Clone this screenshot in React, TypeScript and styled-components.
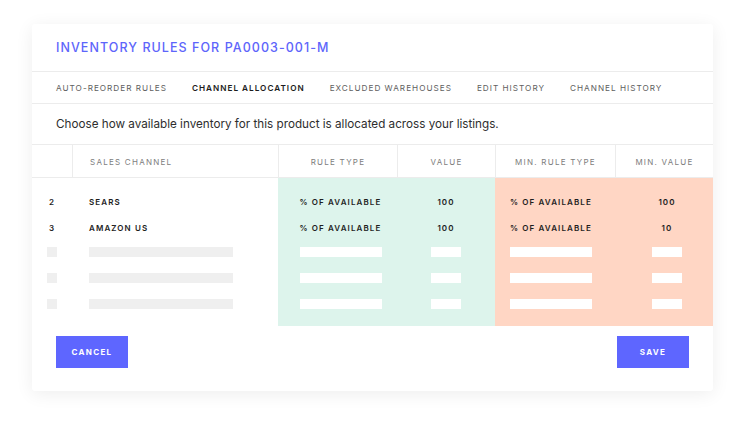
import React from "react";
import styled, { createGlobalStyle, css } from "styled-components";

type Align = "left" | "center";
type Tone = "none" | "green" | "peach";

interface ColumnDef {
  key: keyof RowData;
  label: string;
  width: number;
  align: Align;
  tone: Tone;
  nudge: number;
  bar: number;
}

interface RowData {
  num: string;
  channel: string;
  ruleType: string;
  value: string;
  minRuleType: string;
  minValue: string;
}

const columns: ColumnDef[] = [
  { key: "num", label: "", width: 40, align: "center", tone: "none", nudge: 0, bar: 10 },
  { key: "channel", label: "SALES CHANNEL", width: 206, align: "left", tone: "none", nudge: 0, bar: 144 },
  { key: "ruleType", label: "RULE TYPE", width: 119, align: "center", tone: "green", nudge: 3, bar: 82 },
  { key: "value", label: "VALUE", width: 98, align: "center", tone: "green", nudge: 0, bar: 30 },
  { key: "minRuleType", label: "MIN. RULE TYPE", width: 120, align: "center", tone: "peach", nudge: -4, bar: 82 },
  { key: "minValue", label: "MIN. VALUE", width: 98, align: "center", tone: "peach", nudge: 3, bar: 30 },
];

const rows: RowData[] = [
  { num: "2", channel: "SEARS", ruleType: "% OF AVAILABLE", value: "100", minRuleType: "% OF AVAILABLE", minValue: "100" },
  { num: "3", channel: "AMAZON US", ruleType: "% OF AVAILABLE", value: "100", minRuleType: "% OF AVAILABLE", minValue: "10" },
];

const tabs = ["AUTO-REORDER RULES", "CHANNEL ALLOCATION", "EXCLUDED WAREHOUSES", "EDIT HISTORY", "CHANNEL HISTORY"];

const placeholderRows = 3;

const GlobalStyle = createGlobalStyle`
  body {
    margin: 0;
    background: #fff;
    font-family: Inter, "Noto Sans", sans-serif;
    -webkit-font-smoothing: antialiased;
  }
`;

const Page = styled.div`
  padding: 24px 32px;
`;

const Card = styled.div`
  width: 681px;
  background: #fff;
  border-radius: 3px;
  box-shadow: 0 3px 18px rgba(0, 0, 0, 0.07);
  overflow: hidden;
`;

const Title = styled.h1`
  margin: 0;
  height: 48px;
  padding: 0 24px;
  display: flex;
  align-items: center;
  font-size: 12.5px;
  font-weight: 500;
  letter-spacing: 1.05px;
  color: #5d65fb;
  border-bottom: 1px solid #ececec;
  box-sizing: border-box;
`;

const Tabs = styled.nav`
  height: 32px;
  padding: 0 24px;
  display: flex;
  align-items: center;
  gap: 25px;
  border-bottom: 1px solid #ececec;
  box-sizing: border-box;
`;

const Tab = styled.span<{ $active?: boolean }>`
  font-size: 8.2px;
  letter-spacing: 1px;
  color: ${(p) => (p.$active ? "#1c1c1c" : "#5e5e5e")};
  font-weight: ${(p) => (p.$active ? 600 : 400)};
`;

const Description = styled.p`
  margin: 0;
  height: 41px;
  padding: 0 24px;
  display: flex;
  align-items: center;
  font-size: 11.7px;
  color: #2e2e2e;
  border-bottom: 1px solid #ececec;
  box-sizing: border-box;
`;

const HeaderRow = styled.div`
  display: flex;
  height: 33px;
  border-bottom: 1px solid #ececec;
  box-sizing: border-box;
`;

const HeaderCell = styled.div<{ $width: number; $align: Align; $first: boolean }>`
  width: ${(p) => p.$width}px;
  flex: none;
  display: flex;
  align-items: center;
  justify-content: ${(p) => (p.$align === "left" ? "flex-start" : "center")};
  padding-left: ${(p) => (p.$align === "left" ? "17px" : "0")};
  padding-top: 2px;
  box-sizing: border-box;
  border-left: ${(p) => (p.$first ? "none" : "1px solid #ececec")};
  font-size: 8px;
  letter-spacing: 1.25px;
  color: #7d7d7d;
`;

const Body = styled.div`
  display: flex;
`;

const toneColors: Record<Tone, string> = {
  none: "#fff",
  green: "#ddf4ec",
  peach: "#ffd6c4",
};

const BodyColumn = styled.div<{ $width: number; $tone: Tone }>`
  width: ${(p) => p.$width}px;
  flex: none;
  padding: 11px 0 7px;
  background: ${(p) => toneColors[p.$tone]};
`;

const Cell = styled.div<{ $align: Align; $nudge: number; $placeholder?: boolean }>`
  height: 26px;
  display: flex;
  justify-content: ${(p) => (p.$align === "left" ? "flex-start" : "center")};
  padding-left: ${(p) => (p.$align === "left" ? 17 : Math.max(p.$nudge, 0) * 2)}px;
  padding-right: ${(p) => (p.$nudge < 0 ? -p.$nudge * 2 : 0)}px;
  box-sizing: border-box;
  font-size: 8px;
  font-weight: 600;
  letter-spacing: 1.1px;
  color: #1e1e1e;
  ${(p) =>
    p.$placeholder
      ? css`
          align-items: flex-start;
          padding-top: 6px;
        `
      : css`
          align-items: center;
        `}
`;

const Bar = styled.div<{ $width: number; $tone: Tone }>`
  width: ${(p) => p.$width}px;
  height: 10px;
  background: ${(p) => (p.$tone === "none" ? "#efefef" : "#fff")};
`;

const Footer = styled.div`
  display: flex;
  justify-content: space-between;
  padding: 10px 24px 23px;
`;

const Button = styled.button`
  width: 72px;
  height: 32px;
  border: none;
  border-radius: 0;
  background: #5e66ff;
  color: #fff;
  font-family: Inter, "Noto Sans", sans-serif;
  font-size: 8px;
  font-weight: 700;
  letter-spacing: 1.3px;
  cursor: pointer;
`;

export default function App() {
  return (
    <>
      <GlobalStyle />
      <Page>
        <Card>
          <Title>INVENTORY RULES FOR PA0003-001-M</Title>
          <Tabs>
            {tabs.map((t) => (
              <Tab key={t} $active={t === "CHANNEL ALLOCATION"}>
                {t}
              </Tab>
            ))}
          </Tabs>
          <Description>Choose how available inventory for this product is allocated across your listings.</Description>
          <HeaderRow>
            {columns.map((c, i) => (
              <HeaderCell key={c.key} $width={c.width} $align={c.align} $first={i === 0}>
                {c.label}
              </HeaderCell>
            ))}
          </HeaderRow>
          <Body>
            {columns.map((c) => (
              <BodyColumn key={c.key} $width={c.width} $tone={c.tone}>
                {rows.map((r, ri) => (
                  <Cell key={ri} $align={c.align} $nudge={c.nudge}>
                    {r[c.key]}
                  </Cell>
                ))}
                {Array.from({ length: placeholderRows }).map((_, pi) => (
                  <Cell key={`p${pi}`} $align={c.align} $nudge={c.nudge} $placeholder>
                    <Bar $width={c.bar} $tone={c.tone} />
                  </Cell>
                ))}
              </BodyColumn>
            ))}
          </Body>
          <Footer>
            <Button>CANCEL</Button>
            <Button>SAVE</Button>
          </Footer>
        </Card>
      </Page>
    </>
  );
}
